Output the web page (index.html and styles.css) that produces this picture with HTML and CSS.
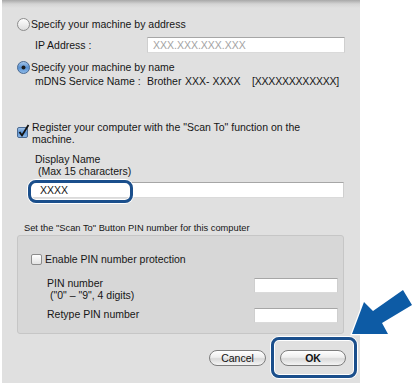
FILE: index.html
```html
<!DOCTYPE html>
<html lang="en">
<head>
    <meta charset="UTF-8">
    <meta name="viewport" content="width=device-width, initial-scale=1.0">
    <title>Scan To settings</title>
    <link rel="stylesheet" href="styles.css">
</head>
<body>
    <div class="panel">
        <div class="option">
            <svg class="radio" width="13" height="13" viewBox="0 0 13 13">
                <defs>
                    <linearGradient id="rg" x1="0" y1="0" x2="0" y2="1">
                        <stop offset="0" stop-color="#ffffff"/>
                        <stop offset="1" stop-color="#dcdcdc"/>
                    </linearGradient>
                </defs>
                <circle cx="6.5" cy="6.5" r="6" fill="url(#rg)" stroke="#8c8c8c"/>
            </svg>
            <span>Specify your machine by address</span>
        </div>
        <div class="field">
            <label>IP Address :</label>
            <input class="text-input wide" type="text" placeholder="XXX.XXX.XXX.XXX">
        </div>

        <div class="option option-second">
            <svg class="radio" width="13" height="13" viewBox="0 0 13 13">
                <defs>
                    <linearGradient id="rb" x1="0" y1="0" x2="0" y2="1">
                        <stop offset="0" stop-color="#a9c8ea"/>
                        <stop offset="0.5" stop-color="#5a92d2"/>
                        <stop offset="1" stop-color="#8fbbe9"/>
                    </linearGradient>
                </defs>
                <circle cx="6.5" cy="6.5" r="6" fill="url(#rb)" stroke="#4a6a92"/>
                <circle cx="6.5" cy="6.5" r="2" fill="#1c1c1c"/>
            </svg>
            <span>Specify your machine by name</span>
        </div>
        <div class="field mdns">
            <label>mDNS Service Name :</label>
            <span class="brother">Brother</span>
            <span class="model">XXX- XXXX</span>
            <span class="serial">[XXXXXXXXXXXX]</span>
        </div>

        <div class="register">
            <svg class="check" width="13" height="15" viewBox="0 0 13 15">
                <defs>
                    <linearGradient id="cb" x1="0" y1="0" x2="0" y2="1">
                        <stop offset="0" stop-color="#a9c8ea"/>
                        <stop offset="0.5" stop-color="#5a92d2"/>
                        <stop offset="1" stop-color="#8fbbe9"/>
                    </linearGradient>
                </defs>
                <rect x="0.5" y="3.5" width="10" height="10" rx="1.5" fill="url(#cb)" stroke="#4a6a92"/>
                <path d="M2.5 8 L5 11.5 L11.5 1" fill="none" stroke="#111" stroke-width="1.8"/>
            </svg>
            <p>Register your computer with the "Scan To" function on the<br>machine.</p>
        </div>

        <div class="display-name">
            <p>Display Name</p>
            <p class="hint">(Max 15 characters)</p>
        </div>
        <div class="name-box">
            <input class="text-input name-input" type="text" value="XXXX">
            <div class="highlight"></div>
        </div>

        <p class="small">Set the "Scan To" Button PIN number for this computer</p>

        <div class="group">
            <div class="pin-check">
                <span class="box"></span>
                <span>Enable PIN number protection</span>
            </div>
            <div class="pin-row">
                <label>PIN number<br><span class="hint">("0" – "9",  4 digits)</span></label>
                <input class="text-input pin" type="text">
            </div>
            <div class="pin-row retype">
                <label>Retype PIN number</label>
                <input class="text-input pin" type="text">
            </div>
        </div>

        <div class="buttons">
            <button class="btn" type="button">Cancel</button>
            <div class="ok-frame">
                <button class="btn btn-ok" type="button">OK</button>
            </div>
        </div>
    </div>

    <svg class="arrow" width="415" height="383" viewBox="0 0 415 383">
        <polygon points="352,334 364,302 373,311 403,290 412,305 382,323 388,334"
                 fill="#0d5ba5" stroke="#fff" stroke-width="2.5" stroke-linejoin="miter" paint-order="stroke"/>
    </svg>
</body>
</html>
```

FILE: styles.css
```css
body {
    margin: 0;
    padding: 0;
    background-color: #fff;
    font-family: "Liberation Sans", Arial, sans-serif;
    font-size: 10.5px;
    color: #161616;
    position: relative;
    width: 415px;
    height: 383px;
    overflow: hidden;
}

p {
    margin: 0;
}

.panel {
    width: 358px;
    height: 383px;
    margin-left: 2px;
    box-sizing: border-box;
    padding: 18px 3px 0 15px;
    background: linear-gradient(#a8a8a8, #d4d4d4 4px, #e0e0e0 8px);
    display: flex;
    flex-direction: column;
    align-items: flex-start;
}

.option {
    display: flex;
    align-items: center;
    gap: 1px;
    height: 13px;
    line-height: 13px;
}

.option-second {
    margin-top: 8px;
}

.radio {
    display: block;
}

.field {
    display: flex;
    align-items: center;
    margin-left: 18px;
    margin-top: 6px;
}

.field label {
    width: 112px;
}

.text-input {
    box-sizing: border-box;
    background-color: #fff;
    border: 1px solid;
    border-color: #a6a6a6 #cfcfcf #dadada #cfcfcf;
    font-family: "Liberation Sans", Arial, sans-serif;
    font-size: 10.5px;
    color: #161616;
    padding: 0 5px;
    margin: 0;
    outline: none;
}

.text-input::placeholder {
    color: #a3a3a3;
}

.wide {
    width: 198px;
    height: 16px;
}

.mdns {
    margin-top: 1px;
    height: 12px;
    line-height: 12px;
}

.brother {
    width: 38px;
}

.model {
    width: 67px;
}

.serial {
    letter-spacing: -0.2px;
}

.register {
    display: flex;
    align-items: flex-start;
    gap: 2px;
    margin-top: 34px;
    line-height: 12px;
}

.check {
    display: block;
    margin-top: 3px;
}

.display-name {
    margin: 8px 0 0 18px;
    line-height: 12px;
}

.display-name .hint {
    padding-left: 3px;
}

.name-box {
    position: relative;
    margin: 5px 0 0 14px;
}

.name-input {
    display: block;
    width: 313px;
    height: 16px;
    padding-left: 8px;
}

.highlight {
    position: absolute;
    left: -3px;
    top: -2px;
    width: 105px;
    height: 23px;
    box-sizing: border-box;
    border: 3px solid #1b4f8c;
    border-radius: 8px;
    box-shadow: 0 0 0 1px #fff, inset 0 0 0 1px #fff;
}

.small {
    font-size: 9.3px;
    line-height: 11px;
    margin: 25px 0 0 7px;
}

.group {
    margin-top: 1px;
    width: 327px;
    height: 99px;
    box-sizing: border-box;
    background-color: #d7d7d7;
    border: 1px solid #c6c6c6;
    border-radius: 3px;
    padding: 17px 0 0 13px;
}

.pin-check {
    display: flex;
    align-items: center;
    gap: 3px;
    height: 12px;
    line-height: 12px;
}

.box {
    width: 11px;
    height: 11px;
    box-sizing: border-box;
    border: 1px solid #8c8c8c;
    border-radius: 2px;
    background: linear-gradient(#ffffff, #e2e2e2);
}

.pin-row {
    display: flex;
    align-items: flex-start;
    margin: 12px 0 0 16px;
    line-height: 12px;
}

.pin-row label {
    width: 207px;
}

.pin-row .hint {
    padding-left: 3px;
}

.pin {
    width: 84px;
    height: 15px;
    margin-top: 1px;
}

.retype {
    margin-top: 7px;
}

.retype .pin {
    margin-top: 0;
}

.buttons {
    align-self: stretch;
    display: flex;
    align-items: center;
    justify-content: flex-end;
    gap: 5px;
    margin-top: 3px;
}

.btn {
    box-sizing: border-box;
    height: 16px;
    width: 57px;
    padding: 0;
    border: 1px solid #7d7d7d;
    border-radius: 8px;
    background: linear-gradient(#ffffff, #eeeeee 45%, #d9d9d9 55%, #f4f4f4);
    font-family: "Liberation Sans", Arial, sans-serif;
    font-size: 10.5px;
    color: #111;
    line-height: 14px;
    cursor: pointer;
}

.btn-ok {
    width: 66px;
    font-weight: bold;
}

.ok-frame {
    width: 86px;
    height: 41px;
    box-sizing: border-box;
    border: 3px solid #1b4f8c;
    border-radius: 8px;
    padding: 10px 8px 9px 6px;
    display: flex;
    box-shadow: 0 0 0 1px #fff, inset 0 0 0 1px #fff;
}

.arrow {
    position: absolute;
    left: 0;
    top: 0;
    pointer-events: none;
}
```
